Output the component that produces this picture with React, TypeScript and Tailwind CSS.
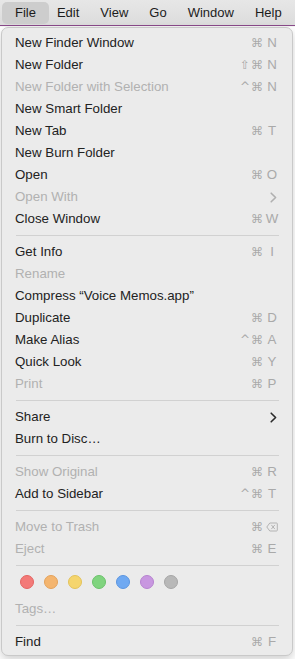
import React from "react";

type Item =
  | { kind: "item"; label: string; disabled?: boolean; mods?: string; key?: string; sub?: boolean; del?: boolean }
  | { kind: "sep" }
  | { kind: "dots" };

const items: Item[] = [
  { kind: "item", label: "New Finder Window", mods: "⌘", key: "N" },
  { kind: "item", label: "New Folder", mods: "⇧⌘", key: "N" },
  { kind: "item", label: "New Folder with Selection", disabled: true, mods: "^⌘", key: "N" },
  { kind: "item", label: "New Smart Folder" },
  { kind: "item", label: "New Tab", mods: "⌘", key: "T" },
  { kind: "item", label: "New Burn Folder" },
  { kind: "item", label: "Open", mods: "⌘", key: "O" },
  { kind: "item", label: "Open With", disabled: true, sub: true },
  { kind: "item", label: "Close Window", mods: "⌘", key: "W" },
  { kind: "sep" },
  { kind: "item", label: "Get Info", mods: "⌘", key: "I" },
  { kind: "item", label: "Rename", disabled: true },
  { kind: "item", label: "Compress “Voice Memos.app”" },
  { kind: "item", label: "Duplicate", mods: "⌘", key: "D" },
  { kind: "item", label: "Make Alias", mods: "^⌘", key: "A" },
  { kind: "item", label: "Quick Look", mods: "⌘", key: "Y" },
  { kind: "item", label: "Print", disabled: true, mods: "⌘", key: "P" },
  { kind: "sep" },
  { kind: "item", label: "Share", sub: true },
  { kind: "item", label: "Burn to Disc…" },
  { kind: "sep" },
  { kind: "item", label: "Show Original", disabled: true, mods: "⌘", key: "R" },
  { kind: "item", label: "Add to Sidebar", mods: "^⌘", key: "T" },
  { kind: "sep" },
  { kind: "item", label: "Move to Trash", disabled: true, mods: "⌘", del: true },
  { kind: "item", label: "Eject", disabled: true, mods: "⌘", key: "E" },
  { kind: "sep" },
  { kind: "dots" },
  { kind: "item", label: "Tags…", disabled: true },
  { kind: "sep" },
  { kind: "item", label: "Find", mods: "⌘", key: "F" },
];

const dots = [
  ["#f37a78", "#e46462"],
  ["#f4b56f", "#e4a25a"],
  ["#f5d56d", "#e3c25a"],
  ["#80d47f", "#6bc26b"],
  ["#6fa9f2", "#5b95e0"],
  ["#c897e0", "#b683cf"],
  ["#b8b8b8", "#a6a6a6"],
];

function Chevron({ dark }: { dark: boolean }) {
  return (
    <svg width="7" height="11" viewBox="0 0 7 11" className="block">
      <path d="M1.2 1.2 L5.6 5.5 L1.2 9.8" fill="none" stroke={dark ? "#2a2a2a" : "#b0b0b0"} strokeWidth="1.6" strokeLinecap="round" strokeLinejoin="round" />
    </svg>
  );
}

function DelKey() {
  return (
    <svg width="12" height="10" viewBox="0 0 12 10" className="block">
      <path d="M3.8 1 H10.5 a0.8 0.8 0 0 1 0.8 0.8 V8.2 a0.8 0.8 0 0 1 -0.8 0.8 H3.8 L0.8 5 Z" fill="none" stroke="#b3b3b3" strokeWidth="1" strokeLinejoin="round" />
      <path d="M5.6 3.2 L8.6 6.8 M8.6 3.2 L5.6 6.8" stroke="#b3b3b3" strokeWidth="1" strokeLinecap="round" />
    </svg>
  );
}

export default function App() {
  const font = { fontFamily: "'Liberation Sans', Arial, sans-serif" };
  return (
    <div className="w-[295px] h-[659px] bg-white overflow-hidden relative" style={font}>
      {/* menu bar */}
      <div className="h-[25px] bg-gradient-to-b from-[#e7e7e7] to-[#dcdcdc] flex items-center pl-[15px] gap-[21px] text-[13px] text-[#1c1c1c] whitespace-nowrap">
        <span className="px-[13px] -mx-[13px] h-[22px] flex items-center rounded-[5px] bg-[#cdcdcd]">File</span>
        <span>Edit</span>
        <span>View</span>
        <span>Go</span>
        <span>Window</span>
        <span>Help</span>
      </div>
      <div className="h-[1px] bg-[#8a4a8a]" />
      <div className="h-[1px] bg-[#f4f4f4]" />
      {/* menu */}
      <div className="ml-[1px] w-[292px] bg-[#ebebeb] border border-[#c9c9c9] rounded-[7px] shadow-[0_4px_10px_rgba(0,0,0,0.18)] pt-[4px] pb-[2px] text-[13.3px]">
        {items.map((it, i) => {
          if (it.kind === "sep") {
            return (
              <div key={i} className="h-[11px] flex items-center pl-[14px] pr-[13px]">
                <div className="h-[1px] w-full bg-[#d1d1d1]" />
              </div>
            );
          }
          if (it.kind === "dots") {
            return (
              <div key={i} className="h-[27px] flex items-start pt-[4px] pl-[18px] gap-[10px]">
                {dots.map(([c, b], j) => (
                  <div key={j} className="w-[14px] h-[14px] rounded-full border" style={{ backgroundColor: c, borderColor: b }} />
                ))}
              </div>
            );
          }
          const color = it.disabled ? "text-[#b1b1b1]" : "text-[#222222]";
          return (
            <div key={i} className={`h-[22px] flex items-center pl-[13px] pr-[13px] ${color}`}>
              <span className="flex-1 whitespace-nowrap">{it.label}</span>
              {it.sub ? (
                <span className="w-[12px] flex justify-center">
                  <Chevron dark={!it.disabled} />
                </span>
              ) : it.mods ? (
                <span className="flex items-center text-[#a9a9a9]">
                  <span className="tracking-[1px]" style={{ fontFamily: "'DejaVu Sans', sans-serif", fontSize: "12px" }}>
                    {it.mods}
                  </span>
                  <span className="w-[14px] flex justify-center ml-[1px]">
                    {it.del ? <DelKey /> : it.key}
                  </span>
                </span>
              ) : null}
            </div>
          );
        })}
      </div>
    </div>
  );
}
